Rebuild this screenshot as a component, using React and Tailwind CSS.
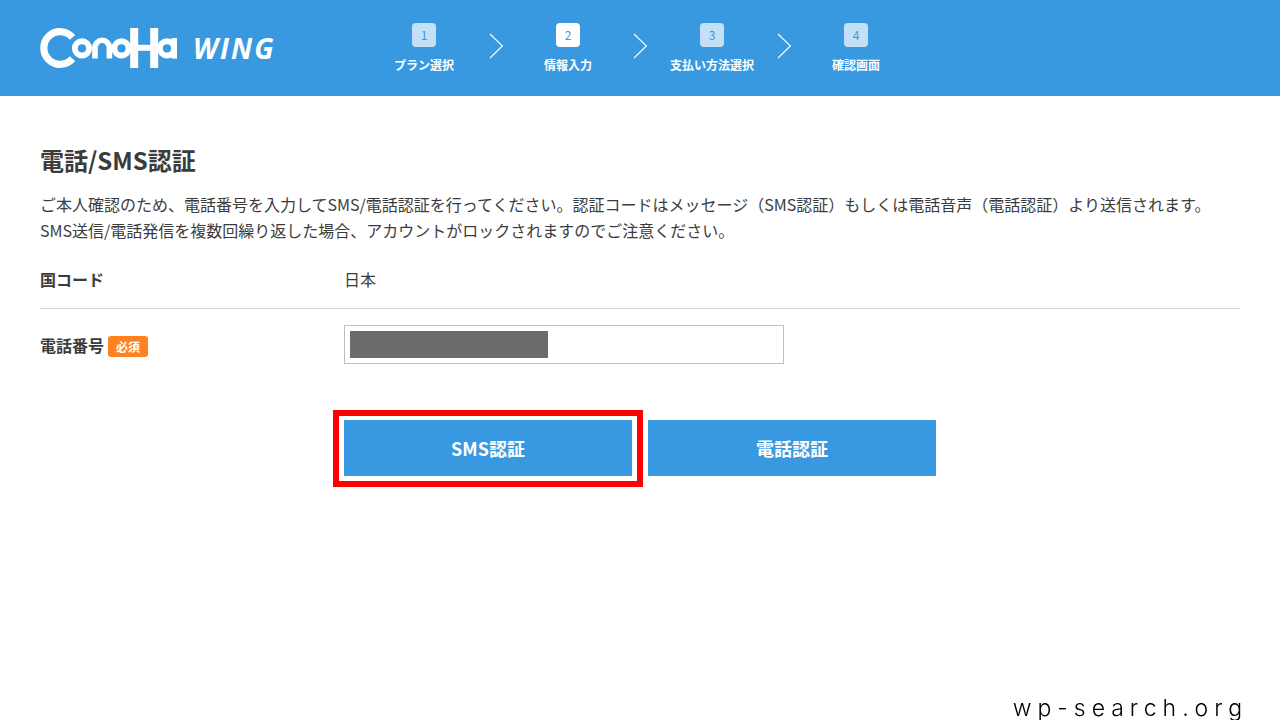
import React from "react";

const steps = ["プラン選択", "情報入力", "支払い方法選択", "確認画面"];
const currentStep = 1;

function Logo() {
  return (
    <a href="#" aria-label="ConoHa WING" className="flex w-80 shrink-0 items-center gap-4 text-white">
      <svg viewBox="0 0 137 40" className="h-10 w-[137px]" fill="none" stroke="currentColor">
        <path d="M32.5 9.4A16.3 16.3 0 1 0 32.5 30.6" strokeWidth="7.2" />
        <circle cx="42" cy="20.4" r="7.1" strokeWidth="6" />
        <path d="M55 30.6V19.5a7 7 0 0 1 14.4 0V30.6" strokeWidth="5.6" />
        <circle cx="81.5" cy="20.4" r="7.1" strokeWidth="6" />
        <path d="M94.2 0V40M114.2 0V40" strokeWidth="8" />
        <path d="M94 19.8H114" strokeWidth="6" />
        <circle cx="127" cy="20.4" r="7.1" strokeWidth="6" />
        <path d="M134.3 10V30.6" strokeWidth="5.4" />
      </svg>
      <span className="font-['Open_Sans',sans-serif] text-[28px] leading-10 font-bold tracking-[2px] italic">WING</span>
    </a>
  );
}

function Steps() {
  return (
    <ol className="flex pt-0.5 text-xs text-white">
      {steps.map((label, i) => (
        <li key={label} className="flex items-start">
          <div className="flex w-32 flex-col items-center gap-2">
            <span
              className={
                i === currentStep
                  ? "flex size-6 items-center justify-center rounded-sm bg-white text-[#3999e0]"
                  : "flex size-6 items-center justify-center rounded-sm bg-[#c4e0f6] text-[#3999e0]"
              }
            >
              {i + 1}
            </span>
            <span className="leading-5 font-bold">{label}</span>
          </div>
          {i < steps.length - 1 && (
            <svg viewBox="0 0 16 26" className="mt-2.5 h-[26px] w-4" fill="none" stroke="white" strokeWidth="1.1">
              <path d="M2 1L14.4 13L2 25" />
            </svg>
          )}
        </li>
      ))}
    </ol>
  );
}

export default function App() {
  return (
    <div className="min-h-screen bg-white font-['Noto_Sans_CJK_JP',sans-serif] text-base text-[#3c3c3c]">
      <header className="flex h-24 items-center bg-[#3999e0] px-10">
        <Logo />
        <Steps />
      </header>

      <main className="px-10 pt-12">
        <h1 className="text-2xl leading-8 font-bold">電話/SMS認証</h1>
        <p className="mt-[15px] leading-[26px]">
          ご本人確認のため、電話番号を入力してSMS/電話認証を行ってください。認証コードはメッセージ（SMS認証）もしくは電話音声（電話認証）より送信されます。
          <br />
          SMS送信/電話発信を複数回繰り返した場合、アカウントがロックされますのでご注意ください。
        </p>

        <form onSubmit={(e) => e.preventDefault()}>
          <div className="mt-2 flex items-center border-b border-[#d6d6d6] pt-4 pb-[17px]">
            <span className="w-76 shrink-0 font-bold">国コード</span>
            <span>日本</span>
          </div>

          <div className="flex items-center py-4">
            <label htmlFor="phone" className="flex w-76 shrink-0 items-baseline gap-1 font-bold">
              電話番号
              <span className="rounded-[3px] bg-[#ff821e] px-2 text-xs leading-[21px] text-white">必須</span>
            </label>
            <div className="relative w-full max-w-110">
              <input id="phone" type="tel" className="block h-[39px] w-full border border-[#bfbfbf] px-2" />
              <div className="absolute top-1.5 left-1.5 h-[27px] w-[198px] bg-[#6b6b6b]" />
            </div>
          </div>

          <div className="mt-10 ml-76 flex gap-4">
            <div className="relative">
              <button type="submit" className="h-14 w-72 bg-[#3999e0] text-lg font-bold text-white">
                SMS認証
              </button>
              <div className="pointer-events-none absolute -inset-x-[11px] -top-2.5 -bottom-[11px] border-6 border-[#f00]" />
            </div>
            <button type="button" className="h-14 w-72 bg-[#3999e0] text-lg font-bold text-white">
              電話認証
            </button>
          </div>
        </form>
      </main>

      <div className="fixed right-8 -bottom-1 font-['Inter',sans-serif] text-[23px] leading-8 font-light tracking-[6px] text-black">
        wp-search.org
      </div>
    </div>
  );
}
